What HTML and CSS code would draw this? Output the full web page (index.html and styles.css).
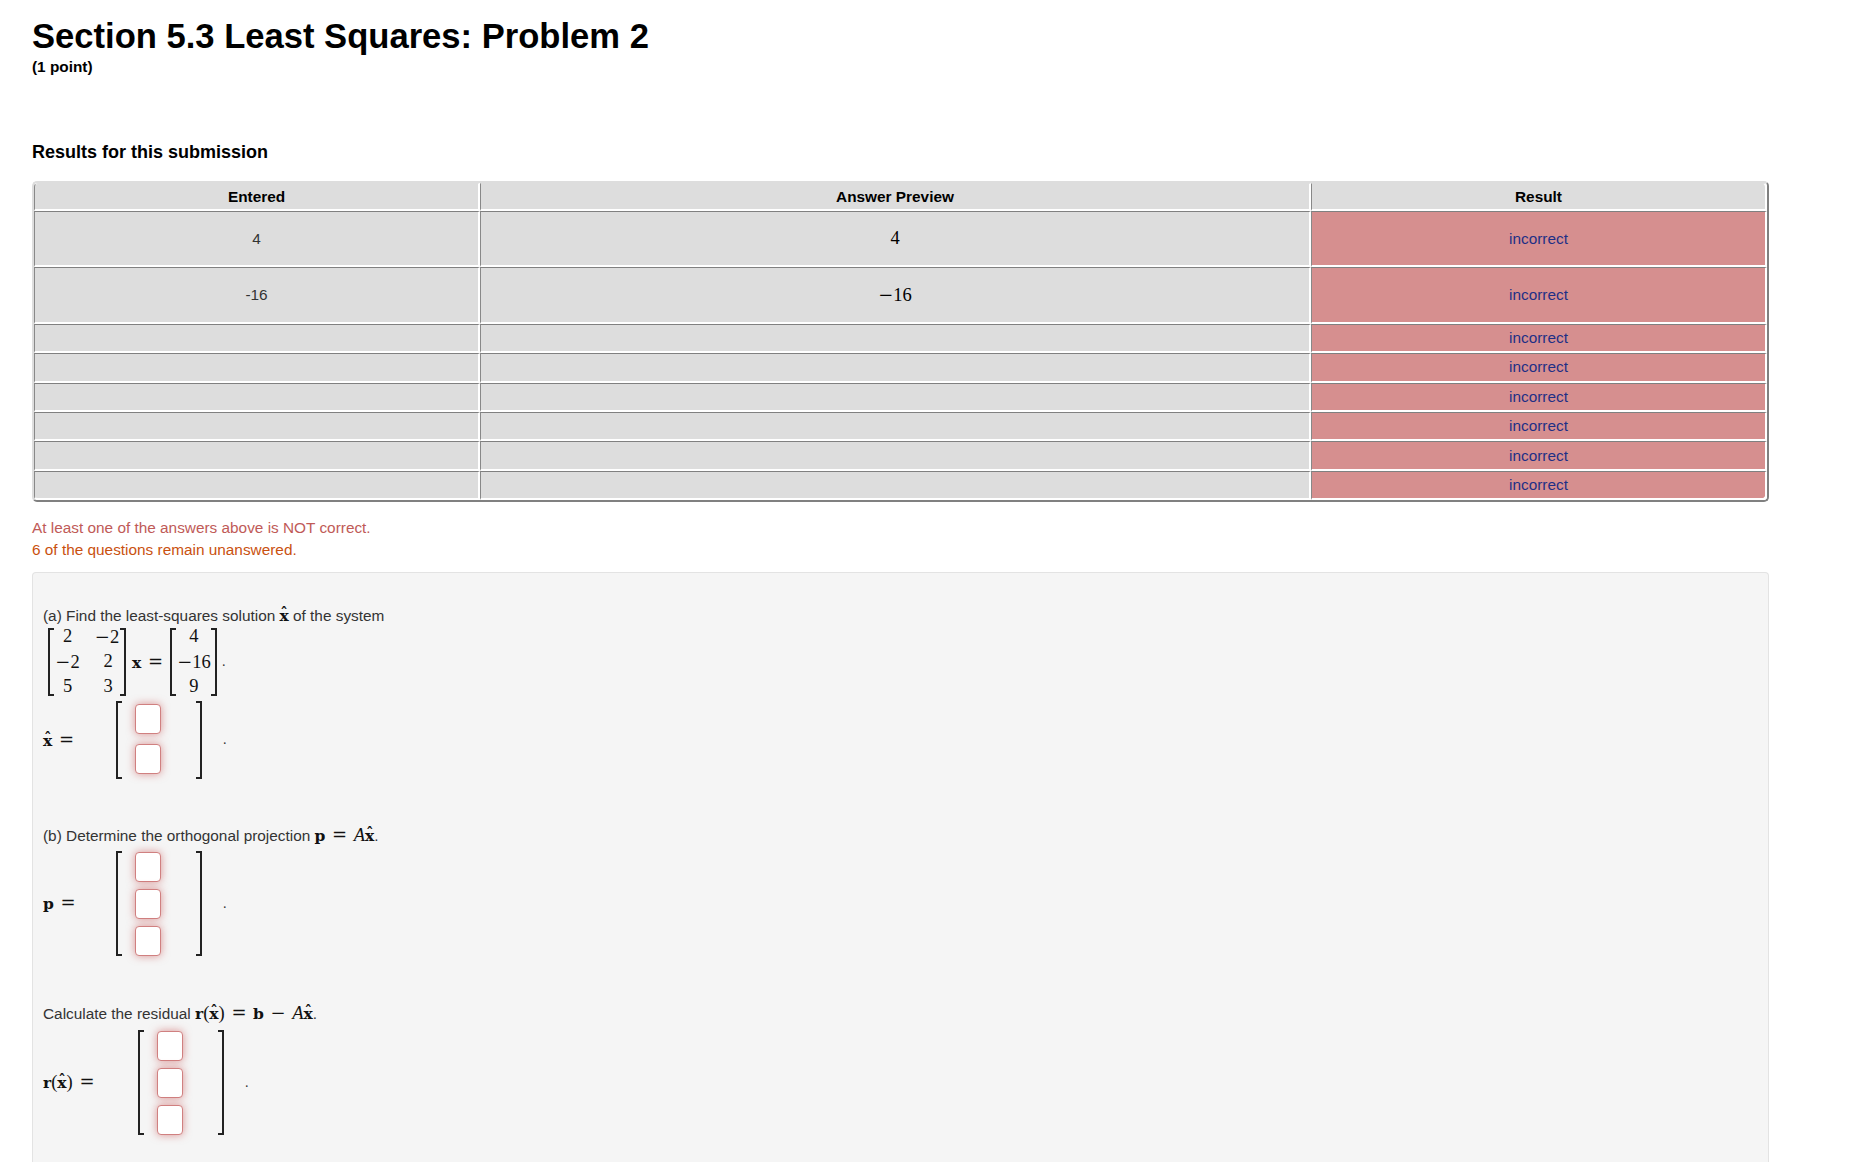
FILE: index.html

```html
<!DOCTYPE html>
<html lang="en">
<head>
    <meta charset="UTF-8">
    <title>Section 5.3 Least Squares: Problem 2</title>
    <link rel="stylesheet" href="styles.css">
</head>
<body>
    <h1 class="title">Section 5.3 Least Squares: Problem 2</h1>
    <p class="points">(1 point)</p>

    <h2 class="results-head">Results for this submission</h2>
    <table class="results">
        <colgroup>
            <col class="col-entered">
            <col class="col-preview">
            <col class="col-result">
        </colgroup>
        <thead>
            <tr><th>Entered</th><th>Answer Preview</th><th>Result</th></tr>
        </thead>
        <tbody>
            <tr class="tall"><td>4</td><td class="preview">4</td><td class="bad">incorrect</td></tr>
            <tr class="tall"><td>-16</td><td class="preview"><span class="op">−</span>16</td><td class="bad">incorrect</td></tr>
            <tr><td></td><td></td><td class="bad">incorrect</td></tr>
            <tr><td></td><td></td><td class="bad">incorrect</td></tr>
            <tr><td></td><td></td><td class="bad">incorrect</td></tr>
            <tr><td></td><td></td><td class="bad">incorrect</td></tr>
            <tr><td></td><td></td><td class="bad">incorrect</td></tr>
            <tr><td></td><td></td><td class="bad">incorrect</td></tr>
        </tbody>
    </table>

    <p class="alert alert-one">At least one of the answers above is NOT correct.</p>
    <p class="alert alert-two">6 of the questions remain unanswered.</p>

    <div class="problem">
        <p class="line line-a">(a) Find the least-squares solution <span class="math"><b class="hat">x</b></span> of the system</p>
        <div class="system math">
            <div class="matrix">
                <span class="brk brk-l"></span>
                <div class="cells cells-2">
                    <span>2</span><span class="end"><span class="op">−</span>2</span>
                    <span><span class="op">−</span>2</span><span>2</span>
                    <span>5</span><span>3</span>
                </div>
                <span class="brk brk-r"></span>
            </div>
            <span class="eq"><b>x</b> <span class="op">=</span></span>
            <div class="matrix">
                <span class="brk brk-l"></span>
                <div class="cells cells-1">
                    <span>4</span>
                    <span><span class="op">−</span>16</span>
                    <span>9</span>
                </div>
                <span class="brk brk-r"></span>
            </div>
            <span class="dot">.</span>
        </div>

        <div class="answer answer-x">
            <span class="label math"><b class="hat">x</b> <span class="op">=</span></span>
            <div class="box-matrix">
                <span class="brk brk-l"></span>
                <div class="inputs">
                    <input type="text">
                    <input type="text">
                </div>
                <span class="brk brk-r"></span>
            </div>
            <span class="dot">.</span>
        </div>

        <p class="line line-b">(b) Determine the orthogonal projection <span class="math"><b>p</b> <span class="op">=</span> <i>A</i><b class="hat">x</b></span>.</p>
        <div class="answer answer-p">
            <span class="label math"><b>p</b> <span class="op">=</span></span>
            <div class="box-matrix">
                <span class="brk brk-l"></span>
                <div class="inputs">
                    <input type="text">
                    <input type="text">
                    <input type="text">
                </div>
                <span class="brk brk-r"></span>
            </div>
            <span class="dot">.</span>
        </div>

        <p class="line line-c">Calculate the residual <span class="math"><b>r</b>(<b class="hat">x</b>) <span class="op">=</span> <b>b</b> <span class="op">−</span> <i>A</i><b class="hat">x</b></span>.</p>
        <div class="answer answer-r">
            <span class="label label-wide math"><b>r</b>(<b class="hat">x</b>) <span class="op">=</span></span>
            <div class="box-matrix">
                <span class="brk brk-l"></span>
                <div class="inputs">
                    <input type="text">
                    <input type="text">
                    <input type="text">
                </div>
                <span class="brk brk-r"></span>
            </div>
            <span class="dot">.</span>
        </div>
    </div>
</body>
</html>
```

FILE: styles.css

```css
html, body {
    height: 100%;
    overflow: hidden;
}
body {
    margin: 0;
    padding: 0 103px 0 32px;
    box-sizing: border-box;
    display: flex;
    flex-direction: column;
    font-family: "Liberation Sans", Arial, sans-serif;
    font-size: 15.36px;
    color: #333;
    background-color: #fff;
}
.title {
    margin: 16px 0 0;
    font-size: 34.6px;
    line-height: 41px;
    font-weight: bold;
    color: #000;
}
.points {
    margin: 1px 0 0;
    line-height: 17px;
    font-weight: bold;
    color: #000;
}
.results-head {
    margin: 67px 0 0;
    font-size: 18px;
    line-height: 21px;
    font-weight: bold;
    color: #000;
}

/* results table */
.results {
    margin-top: 18px;
    width: 1737px;
    table-layout: fixed;
    border-collapse: separate;
    border-spacing: 0;
    border: 2px solid;
    border-color: #ddd #808080 #808080 #ddd;
    border-radius: 5px;
    flex: none;
}
.col-entered {
    width: 446px;
}
.col-preview {
    width: 831px;
}
.results th,
.results td {
    box-sizing: border-box;
    padding: 0;
    text-align: center;
    vertical-align: middle;
    background-color: #ddd;
    background-clip: padding-box;
    border-style: solid;
    border-width: 1px 2px 2px 1px;
    border-color: #808080 #fff #fff #888;
}
.results th {
    height: 28px;
    font-weight: bold;
    color: #000;
    border-top-color: #ddd;
}
.results th:first-child {
    border-top-left-radius: 4px;
}
.results th:last-child {
    border-top-right-radius: 4px;
}
.results tr:last-child td:first-child {
    border-bottom-left-radius: 4px;
}
.results tr:last-child td:last-child {
    border-bottom-right-radius: 4px;
}
.results td {
    height: 29.4px;
}
.results .tall td {
    height: 56.4px;
}
.results .bad {
    color: #1f2f86;
    background-color: #d68f8f;
}
.results .preview {
    font-family: "Liberation Serif", "DejaVu Serif", serif;
    font-size: 18.5px;
    color: #000;
}

.alert {
    margin: 0;
    line-height: 22px;
}
.alert-one {
    margin-top: 15px;
    color: #c05a57;
}
.alert-two {
    color: #c9510f;
}

/* problem box */
.problem {
    flex: 1;
    margin-top: 11px;
    padding: 32px 10px 0;
    border: 1px solid #e3e3e3;
    border-bottom: none;
    border-radius: 4px 4px 0 0;
    background-color: #f5f5f5;
}
.line {
    margin: 0;
    line-height: 20px;
}
.math {
    font-family: "Liberation Serif", "DejaVu Serif", serif;
    font-size: 18.5px;
    line-height: 20px;
    word-spacing: 2px;
    color: #111;
}
.math b {
    font-family: "DejaVu Serif", serif;
    font-size: 15.5px;
    font-weight: bold;
}
.op {
    font-family: "DejaVu Serif", serif;
    font-size: 18px;
    font-weight: normal;
}
.hat {
    position: relative;
    display: inline-block;
}
.hat::before {
    content: "\02C6";
    position: absolute;
    left: 0;
    right: 0;
    top: -3px;
    text-align: center;
    font-size: 14px;
    font-weight: bold;
}
.system {
    display: flex;
    align-items: center;
    margin: 2px 0 0 5px;
}
.matrix {
    display: flex;
}
.cells {
    display: grid;
    grid-auto-rows: 25px;
    justify-items: center;
    align-items: center;
    line-height: 25px;
    margin: -4px 0 -3px;
}
.cells-2 {
    grid-template-columns: 27px 24px;
    column-gap: 15px;
    width: 67px;
}
.cells-2 .end {
    margin-left: -2px;
}
.cells-1 {
    grid-template-columns: 36px;
}
.brk {
    box-sizing: border-box;
    width: 6px;
    flex: none;
    border: solid #222;
    border-width: 2px 0;
}
.brk-l {
    border-left-width: 2px;
}
.brk-r {
    border-right-width: 2px;
}
.matrix .brk-r {
    margin-left: -1px;
}
.eq {
    margin: 0 7px 0 6px;
}
.dot {
    font-family: "Liberation Serif", serif;
    font-size: 14px;
    color: #333;
}
.system .dot {
    margin-left: 5px;
}

/* answer rows */
.answer {
    display: flex;
    align-items: center;
}
.answer-x {
    margin-top: 5px;
}
.answer-p {
    margin-top: 5px;
}
.answer-r {
    margin-top: 6px;
}
.label {
    width: 73px;
    flex: none;
}
.label-wide {
    width: 95px;
}
.box-matrix {
    display: flex;
    width: 86px;
}
.inputs {
    display: flex;
    flex-direction: column;
    gap: 7px;
    padding: 1px 0 0;
    margin: 0 auto 0 13px;
}
.answer-x .inputs {
    gap: 10px;
    padding: 3px 0 5px;
}
.inputs input {
    display: block;
    box-sizing: border-box;
    width: 26px;
    height: 30px;
    padding: 0;
    background-color: #fff;
    border: 1px solid #d08080;
    border-radius: 4px;
    box-shadow: 0 0 9px rgba(200, 80, 80, 0.6);
}
.answer .dot {
    margin-left: 21px;
}
.line-b {
    margin-top: 46px;
}
.line-c {
    margin-top: 47px;
}
```
